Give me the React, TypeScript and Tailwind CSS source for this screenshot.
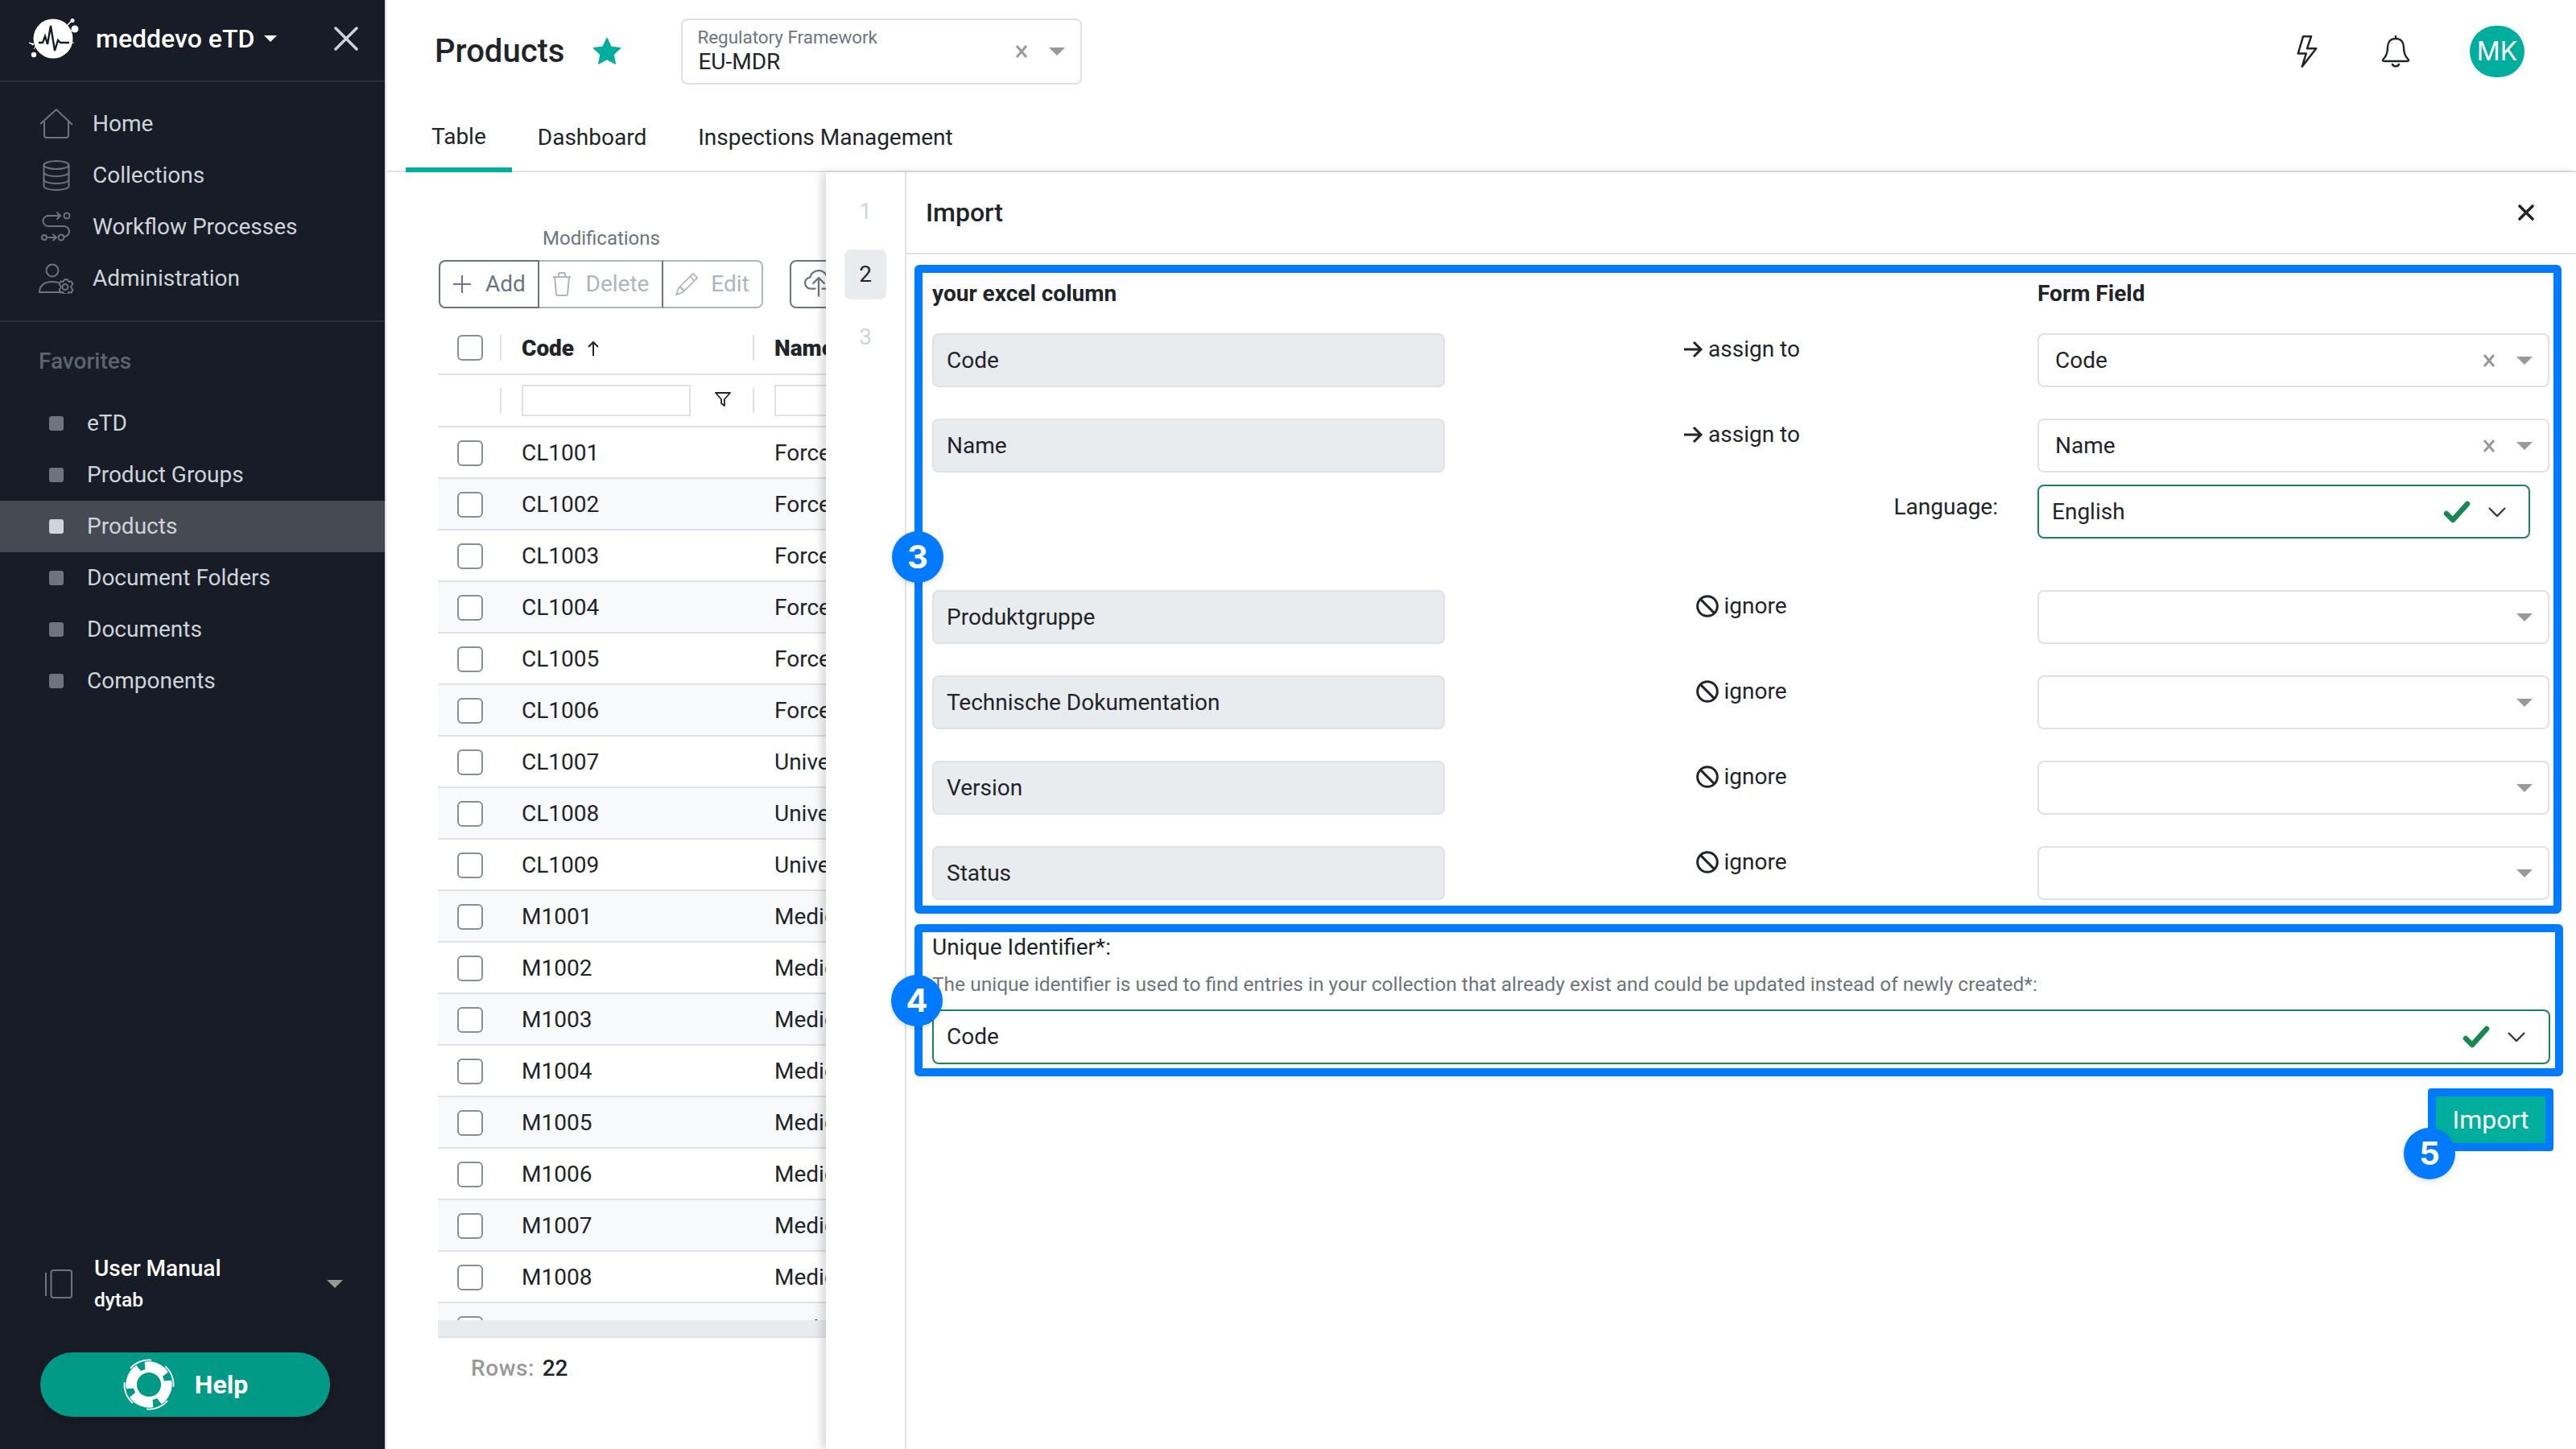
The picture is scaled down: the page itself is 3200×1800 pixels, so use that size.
import React from "react";
import { BsLightning, BsPencil, BsCloudUpload } from "react-icons/bs";

const Caret = ({ className = "" }: { className?: string }) => (
  <svg viewBox="0 0 20 10" className={className} fill="currentColor"><path d="M0 0h20L10 10z" /></svg>
);
const Cross = ({ className = "" }: { className?: string }) => (
  <svg viewBox="0 0 18 18" className={className} fill="none" stroke="currentColor" strokeWidth="3"><path d="M3 2l12 14M15 2L3 16" /></svg>
);
const Check = ({ className = "" }: { className?: string }) => (
  <svg viewBox="0 0 34 28" className={className} fill="none" stroke="#198754" strokeWidth="6.5" strokeLinecap="round" strokeLinejoin="round"><path d="M4 16l8 8L30 4" /></svg>
);
const Chevron = ({ className = "" }: { className?: string }) => (
  <svg viewBox="0 0 22 12" className={className} fill="none" stroke="#343a40" strokeWidth="2.4"><path d="M1 1l10 10L21 1" /></svg>
);

const HomeIcon = () => (
  <svg viewBox="0 0 42 38" className="w-[42px] h-[38px]" fill="none" stroke="#6c757d" strokeWidth="2" strokeLinejoin="round">
    <path d="M1 19L21 1l20 19" />
    <path d="M6 16v17a3 3 0 0 0 3 3h24a3 3 0 0 0 3-3V16" />
  </svg>
);
const DbIcon = () => (
  <svg viewBox="0 0 34 38" className="w-[34px] h-[38px]" fill="none" stroke="#6c757d" strokeWidth="2">
    <ellipse cx="17" cy="6" rx="15.5" ry="5" />
    <path d="M1.5 6v26c0 3 7 5 15.5 5s15.500-2 15.500-5V6" />
    <path d="M1.500 15c0 3 7 5 15.500 5s15.500-2 15.500-5M1.500 24c0 3 7 5 15.500 5s15.500-2 15.500-5" />
  </svg>
);
const FlowIcon = () => (
  <svg viewBox="0 0 38 38" className="w-[38px] h-[38px]" fill="none" stroke="#6c757d" strokeWidth="2" strokeLinecap="round" strokeLinejoin="round">
    <circle cx="32" cy="5" r="3.500" />
    <path d="M24 5H9a6.500 6.500 0 0 0 0 13h19a6.500 6.500 0 0 1 1 13h-1" />
    <path d="M20 1l4 4-4 4" />
    <circle cx="4" cy="32" r="3" />
    <circle cx="25" cy="32" r="3.500" />
    <path d="M9 32h10M15 28.500l4 3.500-4 3.500" />
  </svg>
);
const AdminIcon = () => (
  <svg viewBox="0 0 44 38" className="w-[44px] h-[38px]" fill="none" stroke="#6c757d" strokeWidth="2" strokeLinecap="round" strokeLinejoin="round">
    <circle cx="17" cy="9" r="7.500" />
    <path d="M1 36c0-8 6-13 16-13 3 0 5 .4 7 1M1 36h27" />
    <path d="M33 20l3 .5 1.500 2.500 3-.5 2 3.500-2 2.500v2l2 2.500-2 3.500-3-.5-1.500 2.500h-4l-1.500-2.500-3 .5-2-3.500 2-2.500v-2l-2-2.500 2-3.500 3 .5 1.500-2.500z" />
    <circle cx="33" cy="29.500" r="3.500" />
  </svg>
);
const Logo = () => (
  <svg viewBox="0 0 62 50" className="w-[62px] h-[50px]">
    <circle cx="30" cy="25" r="24.500" fill="#fff" />
    <path d="M44 20L57 13M44 12L54 2" stroke="#fff" strokeWidth="1.500" />
    <circle cx="57" cy="13" r="4.500" fill="#fff" />
    <circle cx="54" cy="2.500" r="2.500" fill="#fff" />
    <circle cx="6" cy="45" r="3.200" fill="#fff" />
    <path d="M0 30l6 1.500-1 1.500zM6 38l4-6" stroke="#fff" strokeWidth="1" fill="#fff" />
    <path d="M52 29.500h4v1h-4z" fill="#fff" />
    <path d="M12 30h5l3-8 3 10 4-23 5 31 4-13 3 3h11" fill="none" stroke="#171c26" strokeWidth="2.400" />
  </svg>
);
const Buoy = () => (
  <svg viewBox="0 0 68 68" className="w-[66px] h-[66px]">
    <g transform="rotate(-22 34 34)">
      <circle cx="34" cy="34" r="22.500" fill="none" stroke="#fff" strokeWidth="14" />
      <g fill="#009a87">
        <path d="M31 14L27 1h14l-4 13zM31 54l-4 13h14l-4-13zM14 31L1 27v14l13-4zM54 31l13-4v14l-13-4z" />
      </g>
      <circle cx="34" cy="34" r="31.500" fill="none" stroke="#fff" strokeWidth="1.800" strokeDasharray="30 19.480" strokeDashoffset="15" />
    </g>
  </svg>
);
const Bell = () => (
  <svg viewBox="0 0 36 40" className="w-[36px] h-[40px]" fill="none" stroke="#212529" strokeWidth="2.400" strokeLinecap="round" strokeLinejoin="round">
    <path d="M18 1v3M18 4c-7 0-10 5-10 11 0 7-2 11-5 14-2 2-1 3 1 3h28c2 0 3-1 1-3-3-3-5-7-5-14 0-6-3-11-10-11z" />
    <path d="M14 36c1 3 7 3 8 0" />
  </svg>
);
const Ban = () => (
  <svg viewBox="0 0 28 28" className="w-[30px] h-[30px] mr-[5px]" fill="none" stroke="#212529" strokeWidth="2.800">
    <circle cx="14" cy="14" r="11.500" /><path d="M6 6l16 16" />
  </svg>
);
const Arrow = () => (
  <svg viewBox="0 0 26 24" className="w-[26px] h-[24px] mr-[6px]" fill="none" stroke="#212529" strokeWidth="3"><path d="M2 12h21M14 3l9 9-9 9" /></svg>
);
const Trash = () => (
  <svg viewBox="0 0 24 30" className="w-[24px] h-[30px]" fill="none" stroke="#adb5bd" strokeWidth="2" strokeLinejoin="round">
    <path d="M1 6h22M8 5V2a1 1 0 0 1 1-1h6a1 1 0 0 1 1 1v3" />
    <path d="M3 6l2 21a2 2 0 0 0 2 2h10a2 2 0 0 0 2-2l2-21" />
  </svg>
);

const Badge = ({ n, className }: { n: number; className: string }) => (
  <div className={`absolute w-[64px] h-[64px] rounded-full bg-[#007bff] text-white flex items-center justify-center text-[40px] font-bold shadow-[0_2px_6px_rgba(0,0,0,0.15)] [font-family:Inter,sans-serif] z-10 ${className}`}>
    {n}
  </div>
);

const Field = ({ value, clear }: { value?: string; clear?: boolean }) => (
  <div className="w-[636px] h-[67px] shrink-0 rounded-[8px] border-2 border-[#dee2e6] bg-white flex items-center pl-[20px] pr-[19px]">
    <span className="flex-1 leading-[28px]">{value}</span>
    {clear && <Cross className="w-[18px] h-[18px] text-[#999999] mr-[25px]" />}
    <Caret className="w-[20px] h-[10px] text-[#999999]" />
  </div>
);

const MapRow = ({ label, value, assign, className = "" }: { label: string; value?: string; assign?: boolean; className?: string }) => (
  <div className={`flex h-[67px] ${className}`}>
    <div className="w-[637px] shrink-0 h-full rounded-[8px] border-2 border-[#dee2e6] bg-[#e9ecef] flex items-center pl-[16px]">{label}</div>
    <div className="w-[736px] shrink-0 flex justify-center pt-[6px]">
      <div className="flex items-center h-[28px] text-[28px] leading-[28px]">
        {assign ? <Arrow /> : <Ban />}
        {assign ? "assign to" : "ignore"}
      </div>
    </div>
    <Field value={value} clear={assign} />
  </div>
);

const NAV = [
  { t: "Home", i: <HomeIcon /> },
  { t: "Collections", i: <DbIcon /> },
  { t: "Workflow Processes", i: <FlowIcon /> },
  { t: "Administration", i: <AdminIcon /> },
];
const FAVS = ["eTD", "Product Groups", "Products", "Document Folders", "Documents", "Components"];
const ROWS = [
  ["CL1001", "Force Sensor"], ["CL1002", "Force Sensor"], ["CL1003", "Force Sensor"], ["CL1004", "Force Sensor"],
  ["CL1005", "Force Sensor"], ["CL1006", "Force Sensor"], ["CL1007", "Universal"], ["CL1008", "Universal"],
  ["CL1009", "Universal"], ["M1001", "Medical"], ["M1002", "Medical"], ["M1003", "Medical"], ["M1004", "Medical"],
  ["M1005", "Medical"], ["M1006", "Medical"], ["M1007", "Medical"], ["M1008", "Medical"], ["M1009", "Medical"],
];

const CheckBox = () => <div className="w-[32px] h-[32px] rounded-[6px] border-[2.5px] border-[#849091] bg-white" />;

export default function App() {
  return (
    <div className="w-[3200px] h-[1800px] flex overflow-hidden bg-white text-[#212529] text-[28px] [font-family:Roboto,sans-serif]">
      {/* Sidebar */}
      <aside className="w-[480px] h-full shrink-0 bg-[#171c26] border-r-2 border-[#dee2e6] flex flex-col">
        <div className="h-[102px] shrink-0 border-b-2 border-[#2a2f3a] flex items-center pl-[36px] pb-[4px]">
          <Logo />
          <span className="ml-[21px] text-[32px] text-white font-medium">meddevo eTD</span>
          <Caret className="w-[16px] h-[8px] text-white ml-[12px]" />
          <svg viewBox="0 0 30 30" className="w-[30px] h-[30px] ml-[71px]" fill="none" stroke="#ced4da" strokeWidth="3.500" strokeLinecap="round"><path d="M2 2l26 26M28 2L2 28" /></svg>
        </div>
        <nav className="pt-[20px] pb-[20px] border-b-2 border-[#2a2f3a]">
          {NAV.map((n) => (
            <div key={n.t} className="h-[64px] flex items-center">
              <div className="w-[115px] shrink-0 pl-[47px] flex justify-start">
                <div className="w-[46px] flex justify-center">{n.i}</div>
              </div>
              <span className="text-[#ced4da]">{n.t}</span>
            </div>
          ))}
        </nav>
        <div className="h-[94px] shrink-0 flex items-center pl-[48px] pt-[4px] font-medium text-[#5c6470]">Favorites</div>
        <div>
          {FAVS.map((f) => (
            <div key={f} className={`h-[64px] flex items-center pl-[61px] ${f === "Products" ? "bg-[#464a53]" : ""}`}>
              <span className={`w-[18px] h-[18px] rounded-[3px] mr-[29px] ${f === "Products" ? "bg-[#ced4da]" : "bg-[#6c757d]"}`} />
              <span className="text-[#ced4da]">{f}</span>
            </div>
          ))}
        </div>
        <div className="mt-auto flex items-center pl-[56px] pr-[52px] h-[84px]">
          <svg viewBox="0 0 34 36" className="w-[34px] h-[36px]" fill="none" stroke="#6c757d" strokeWidth="2"><rect x="7.500" y="1" width="25.500" height="34" rx="3" /><path d="M1 4v29" /></svg>
          <div className="ml-[27px] flex-1 text-white pt-[2px]">
            <div className="font-medium leading-[38px]">User Manual</div>
            <div className="text-[24.5px] font-medium leading-[40px]">dytab</div>
          </div>
          <Caret className="w-[20px] h-[10px] text-[#999999]" />
        </div>
        <div className="mt-[43px] mb-[40px] ml-[50px] w-[360px] h-[80px] rounded-full bg-[#009a87] flex items-center justify-center shadow-[0_4px_12px_rgba(0,0,0,0.2)]">
          <Buoy />
          <span className="ml-[24px] text-[32px] font-bold text-white">Help</span>
        </div>
      </aside>

      {/* Main */}
      <main className="flex-1 min-w-0 flex flex-col">
        <header className="h-[128px] shrink-0 flex items-center pl-[60px] pr-[64px]">
          <span className="text-[40px] font-medium leading-none">Products</span>
          <svg viewBox="0 0 24 24" className="w-[36px] h-[36px] ml-[35px]" fill="#00ae9e"><path d="M12 1l3.300 7.200 7.700.9-5.700 5.300 1.500 7.600L12 18.200 5.200 22l1.500-7.600L1 9.100l7.700-.9z" stroke="#00ae9e" strokeWidth="1" strokeLinejoin="round" /></svg>
          <div className="ml-[74px] w-[498px] h-[82px] rounded-[8px] border-2 border-[#dee2e6] flex items-center pl-[18px] pr-[19px]">
            <div className="flex-1">
              <div className="text-[22.4px] leading-[26px] text-[#6c757d]">Regulatory Framework</div>
              <div className="leading-[36px] ml-[1px] text-[28px]">EU-MDR</div>
            </div>
            <Cross className="w-[18px] h-[18px] text-[#999999] mr-[25px]" />
            <Caret className="w-[20px] h-[10px] text-[#999999]" />
          </div>
          <div className="ml-auto flex items-center">
            <BsLightning className="w-[40px] h-[40px] text-[#212529]" />
            <div className="ml-[72px]"><Bell /></div>
            <div className="ml-[74px] w-[68px] h-[64px] rounded-full bg-[#00ae9e] text-white text-[32px] flex items-center justify-center [font-family:Inter,sans-serif]">MK</div>
          </div>
        </header>

        <div className="h-[86px] shrink-0 border-b-2 border-[#dee2e6] flex pl-[24px]">
          <div className="h-[86px] px-[32px] border-b-[6px] border-[#00ae9e] flex items-center pt-[3px]">Table</div>
          <div className="h-[84px] px-[32px] flex items-center pt-[2px]">Dashboard</div>
          <div className="h-[84px] px-[32px] flex items-center pt-[2px]">Inspections Management</div>
        </div>

        <div className="flex-1 min-h-0 flex">
          {/* Table side */}
          <section className="w-[546px] shrink-0 overflow-hidden pl-[64px]">
            <div className="w-[900px]">
              <div className="h-[109px] pt-[67px] pl-[130px] text-[24px] leading-[30px] text-[#6c757d]">Modifications</div>
              <div className="flex">
                <div className="flex h-[60px] w-[403px] ml-[1px]">
                  <div className="w-[125px] rounded-l-[8px] border-2 border-[#6c757d] flex items-center justify-center text-[#6c757d] gap-[17px]">
                    <svg viewBox="0 0 24 24" className="w-[24px] h-[24px]" fill="none" stroke="#6c757d" strokeWidth="2"><path d="M12 1v22M1 12h22" /></svg>
                    Add
                  </div>
                  <div className="w-[154px] border-y-2 border-r-2 border-[#adb5bd] border-r-[#6c757d] flex items-center justify-center text-[#adb5bd] gap-[18px]">
                    <Trash />Delete
                  </div>
                  <div className="w-[124px] rounded-r-[8px] border-y-2 border-r-2 border-[#adb5bd] flex items-center justify-center text-[#adb5bd] gap-[16px]">
                    <BsPencil className="w-[28px] h-[30px]" />Edit
                  </div>
                </div>
                <div className="ml-[33px] w-[120px] h-[60px] rounded-[8px] border-2 border-[#6c757d] flex items-center pl-[16px] text-[#6c757d]">
                  <BsCloudUpload className="w-[36px] h-[36px]" />
                </div>
              </div>
              {/* Head */}
              <div className="h-[83px] flex items-end border-b-2 border-[#dee2e6] pb-[16px] font-black">
                <div className="w-[79px] h-[32px] flex items-center pl-[24px] border-r-2 border-[#dee2e6]"><CheckBox /></div>
                <div className="w-[314px] h-[32px] flex items-center pl-[25px] pt-[2px] border-r-2 border-[#dee2e6]">
                  Code
                  <svg viewBox="0 0 16 20" className="w-[16px] h-[20px] ml-[16px]" fill="none" stroke="#212529" strokeWidth="2"><path d="M8 19V2M2 8l6-6 6 6" /></svg>
                </div>
                <div className="pl-[25px] pt-[2px] h-[32px] flex items-center">Name</div>
              </div>
              {/* Filters */}
              <div className="h-[65px] flex items-center border-b-2 border-[#dee2e6]">
                <div className="w-[79px] h-[31px] border-r-2 border-[#dee2e6]" />
                <div className="w-[314px] h-[31px] flex items-center pl-[25px] border-r-2 border-[#dee2e6]">
                  <div className="w-[210px] h-[39px] border-2 border-[#dee2e6] bg-white shrink-0" />
                  <svg viewBox="0 0 20 20" className="w-[20px] h-[20px] ml-[30px] -mt-[4px]" fill="none" stroke="#212529" strokeWidth="1.800" strokeLinejoin="round"><path d="M1 2h18l-7 8v8l-4-3v-5z" /></svg>
                </div>
                <div className="pl-[25px]"><div className="w-[210px] h-[39px] border-2 border-[#dee2e6]" /></div>
              </div>
              {/* Rows */}
              <div className="h-[1109px] overflow-hidden">
                {ROWS.map(([c, n], i) => (
                  <div key={c} className={`h-[64px] flex items-center border-b-2 border-[#dee2e6] pt-[2px] ${i % 2 ? "bg-[#f8f9fa]" : "bg-white"}`}>
                    <div className="w-[79px] pl-[24px]"><CheckBox /></div>
                    <div className="w-[314px] pl-[25px]">{c}</div>
                    <div className="pl-[25px]">{n}</div>
                  </div>
                ))}
              </div>
              <div className="h-[22px] bg-[#e9ecef] border-b-2 border-[#dee2e6]" />
              <div className="pl-[41px] pt-[22px] leading-[32px]">
                <span className="text-[#999999] font-medium tracking-[0.6px]">Rows: </span><span className="font-medium ml-[2px]">22</span>
              </div>
            </div>
          </section>

          {/* Import panel */}
          <section className="relative flex-1 min-w-0 flex bg-white shadow-[-6px_0_10px_rgba(0,0,0,0.14)]">
            <div className="w-[100px] shrink-0 border-r-2 border-[#dee2e6] flex flex-col items-center pt-[31px]">
              <div className="h-[36px] flex items-center text-[#ced4da]">1</div>
              <div className="mt-[29px] w-[52px] h-[62px] rounded-[8px] bg-[#e9ecef] flex items-center justify-center">2</div>
              <div className="mt-[29px] h-[36px] flex items-center text-[#ced4da]">3</div>
            </div>
            <div className="flex-1 min-w-0 flex flex-col">
              <div className="h-[102px] shrink-0 border-b-2 border-[#dee2e6] flex items-center pl-[24px] pr-[52px]">
                <span className="flex-1 text-[32px] font-medium">Import</span>
                <svg viewBox="0 0 20 20" className="w-[20px] h-[20px]" fill="none" stroke="#212529" strokeWidth="3.600" strokeLinecap="round"><path d="M2 2l16 16M18 2L2 18" /></svg>
              </div>
              <div className="pl-[10px] pr-[16px] pt-[13px]">
                <div className="relative w-[2046px] h-[806px] rounded-[6px] border-[10px] border-[#007bff] pl-[12px] shadow-[0_2px_6px_rgba(0,0,0,0.08)]">
                  <Badge n={3} className="-left-[38px] top-[321px]" />
                  <div className="flex h-[50px] items-center font-bold text-[#212529] pt-[1px]">
                    <div className="w-[1373px]">your excel column</div>
                    <div>Form Field</div>
                  </div>
                  <MapRow className="mt-[25px]" label="Code" value="Code" assign />
                  <MapRow className="mt-[39px]" label="Name" value="Name" assign />
                  <div className="mt-[15px] h-[67px] flex items-center justify-end pr-[29px]">
                    <span className="mr-[49px] -mt-[11px]">Language:</span>
                    <div className="w-[612px] h-[67px] rounded-[8px] border-2 border-[#198754] flex items-center pl-[16px] pr-[28px]">
                      <span className="flex-1">English</span>
                      <Check className="w-[34px] h-[28px] mr-[22px]" />
                      <Chevron className="w-[22px] h-[12px]" />
                    </div>
                  </div>
                  <MapRow className="mt-[64px]" label="Produktgruppe" />
                  <MapRow className="mt-[39px]" label="Technische Dokumentation" />
                  <MapRow className="mt-[39px]" label="Version" />
                  <MapRow className="mt-[39px]" label="Status" />
                </div>
                <div className="relative mt-[13px] w-[2048px] h-[189px] rounded-[6px] border-[10px] border-[#007bff] pl-[12px] shadow-[0_2px_6px_rgba(0,0,0,0.08)]">
                  <Badge n={4} className="-left-[39px] top-[53px]" />
                  <div className="pt-[5px] leading-[28px]">Unique Identifier*:</div>
                  <div className="mt-[18px] text-[24.5px] leading-[28px] text-[#6c757d]">The unique identifier is used to find entries in your collection that already exist and could be updated instead of newly created*:</div>
                  <div className="mt-[17px] w-[2010px] h-[68px] rounded-[8px] border-2 border-[#198754] flex items-center pl-[16px] pr-[29px]">
                    <span className="flex-1">Code</span>
                    <Check className="w-[34px] h-[28px] mr-[22px]" />
                    <Chevron className="w-[22px] h-[12px]" />
                  </div>
                </div>
                <div className="flex justify-end mt-[15px] w-[2036px]">
                  <div className="relative">
                    <div className="w-[156px] h-[78px] rounded-[4px] border-[10px] border-[#007bff] bg-[#00ae9e] text-white text-[32px] flex items-center justify-center">Import</div>
                    <Badge n={5} className="-left-[30px] -bottom-[35px]" />
                  </div>
                </div>
              </div>
            </div>
          </section>
        </div>
      </main>
    </div>
  );
}
